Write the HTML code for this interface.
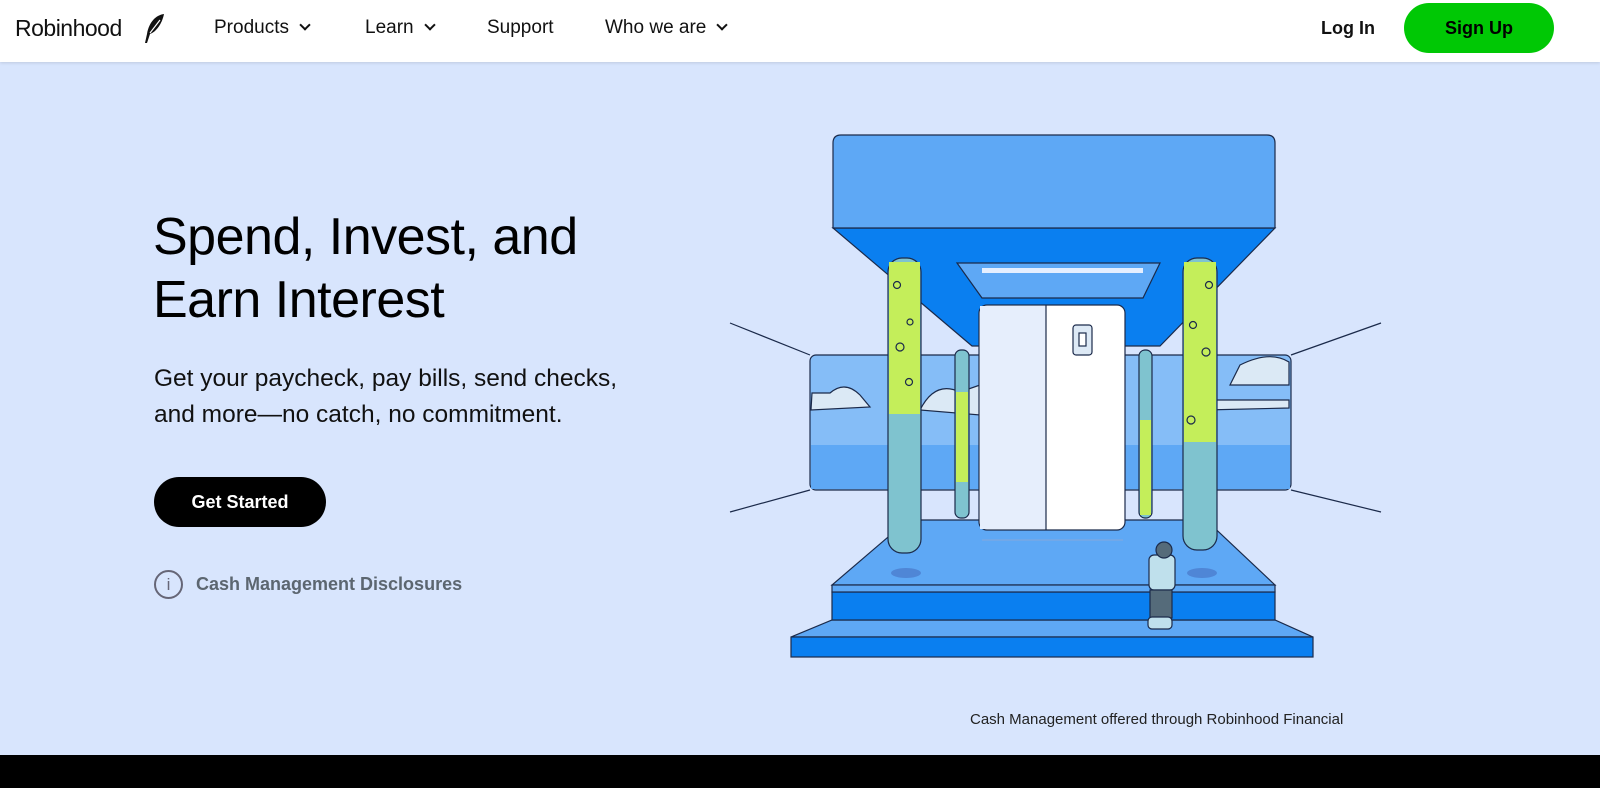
<!DOCTYPE html>
<html><head><meta charset="utf-8"><style>
*{margin:0;padding:0;box-sizing:border-box}
body{width:1600px;height:788px;overflow:hidden;background:#d8e5fd;font-family:"Liberation Sans",sans-serif;position:relative;color:#000}
.nav{position:absolute;left:0;top:0;width:1600px;height:62px;background:#fff;box-shadow:0 1px 3px rgba(0,0,0,.12)}
.nav span{position:absolute;top:17px;font-size:19px;color:#111}
.chev{display:inline-block;width:8px;height:8px;border-right:2.2px solid #111;border-bottom:2.2px solid #111;transform:rotate(45deg);margin-left:12px;position:relative;top:-4px}
.t{position:absolute}
</style></head><body>
<div class="nav">
<span style="left:15px;top:15px;font-size:23px;letter-spacing:-0.5px">Robinhood</span>
<svg style="position:absolute;left:142px;top:12px" width="24" height="34" viewBox="0 0 24 34"><path d="M22 2 C14 3 7 10 5 22 L3 31 L5 31 L8 22 C14 20 20 12 22 2 Z" fill="#111"/><path d="M8 21 L18 8" stroke="#fff" stroke-width="1.2"/></svg>
<span style="left:214px">Products<i class="chev"></i></span>
<span style="left:365px">Learn<i class="chev"></i></span>
<span style="left:487px">Support</span>
<span style="left:605px">Who we are<i class="chev"></i></span>
<span style="left:1321px;font-weight:bold;font-size:18px;top:18px">Log In</span>
<div style="position:absolute;left:1404px;top:3px;width:150px;height:50px;border-radius:25px;background:#00c805;color:#000;font-weight:bold;font-size:18px;text-align:center;line-height:50px">Sign Up</div>
</div>
<div class="t" style="left:153px;top:206px;font-size:52px;line-height:63px;letter-spacing:-0.5px">Spend, Invest, and<br>Earn Interest</div>
<div class="t" style="left:154px;top:361px;font-size:24.5px;line-height:36px;color:#111">Get your paycheck, pay bills, send checks,<br>and more—no catch, no commitment.</div>
<div class="t" style="left:154px;top:477px;width:172px;height:50px;border-radius:25px;background:#000;color:#fff;font-weight:bold;font-size:18px;text-align:center;line-height:50px">Get Started</div>
<div class="t" style="left:154px;top:570px;width:29px;height:29px;border:2px solid #667;border-radius:50%;color:#667;text-align:center;font-size:17px;line-height:25px">i</div>
<div class="t" style="left:196px;top:574px;font-size:18px;font-weight:bold;color:#5c6670">Cash Management Disclosures</div>
<div class="t" style="left:970px;top:711px;font-size:15px;color:#222">Cash Management offered through Robinhood Financial</div>
<svg class="t" style="left:0;top:0" width="1600" height="788" viewBox="0 0 1600 788">
<g stroke="#1b2a4a" stroke-width="1.2">
<line x1="730" y1="323" x2="810" y2="355"/><line x1="730" y1="512" x2="810" y2="490"/>
<line x1="1381" y1="323" x2="1291" y2="355"/><line x1="1381" y1="512" x2="1291" y2="490"/>
<polygon points="832,620 1275,620 1313,637 791,637" fill="#5ea8f5"/>
<rect x="791" y="637" width="522" height="20" fill="#0a7ff0"/>
<polygon points="908,520 1206,520 1275,585 832,585" fill="#5ea8f5"/>
<rect x="832" y="592" width="443" height="28" fill="#0a7ff0"/>
<rect x="832" y="585" width="443" height="7" fill="#5ea8f5"/>
<rect x="810" y="355" width="481" height="135" rx="6" fill="#85bdf7"/>
<rect x="811" y="445" width="479" height="44" fill="#5ea8f5" stroke="none"/>
<path d="M812 393 L830 393 Q845 380 860 395 L870 407 L811 410Z M920 410 Q935 380 960 392 L980 385 L980 415Z M1240 365 Q1270 350 1289 362 L1289 385 L1230 385Z M1205 400 L1289 400 L1289 408 L1205 410Z" fill="#dbe9f5"/>
<polygon points="833,228 1275,228 1160,346 972,346" fill="#0a7ff0"/>
<path d="M833,228 L833,143 Q833,135 841,135 L1267,135 Q1275,135 1275,143 L1275,228 Z" fill="#5ea8f5"/>
<polygon points="957,263 1160,263 1143,298 982,298" fill="#5ea8f5"/>
<rect x="982" y="268" width="161" height="5" fill="#e5efff" stroke="none"/>
<rect x="979" y="305" width="146" height="225" rx="8" fill="#ffffff"/>
<rect x="980" y="306" width="66" height="223" fill="#e6eefc" stroke="none"/>
<line x1="1046" y1="305" x2="1046" y2="530"/>
<rect x="1073" y="325" width="19" height="30" rx="3" fill="#dde9f5"/>
<rect x="1079" y="333" width="7" height="13" fill="#fff"/>
<line x1="982" y1="540" x2="1123" y2="540" stroke="#7fa9e0"/>
<rect x="955" y="350" width="14" height="168" rx="6" fill="#7fc3cf"/>
<rect x="956" y="392" width="12" height="90" fill="#c4ee5a" stroke="none"/>
<rect x="1139" y="350" width="13" height="168" rx="6" fill="#7fc3cf"/>
<rect x="1140" y="420" width="11" height="95" fill="#c4ee5a" stroke="none"/>
<rect x="888" y="258" width="33" height="295" rx="14" fill="#7fc3cf"/>
<rect x="889" y="262" width="31" height="152" fill="#c4ee5a" stroke="none"/>
<rect x="1183" y="258" width="34" height="292" rx="14" fill="#7fc3cf"/>
<rect x="1184" y="262" width="32" height="180" fill="#c4ee5a" stroke="none"/>
<g fill="none"><circle cx="897" cy="285" r="3.5"/><circle cx="910" cy="322" r="3"/><circle cx="900" cy="347" r="4"/><circle cx="909" cy="382" r="3.5"/><circle cx="1209" cy="285" r="3.5"/><circle cx="1193" cy="325" r="3.5"/><circle cx="1206" cy="352" r="4"/><circle cx="1191" cy="420" r="4"/></g>
<ellipse cx="906" cy="573" rx="15" ry="5" fill="#4f86d6" stroke="none"/>
<ellipse cx="1202" cy="573" rx="15" ry="5" fill="#4f86d6" stroke="none"/>
<rect x="1149" y="555" width="26" height="35" rx="5" fill="#bfe0ec"/>
<rect x="1150" y="590" width="22" height="28" fill="#556b7a"/>
<circle cx="1164" cy="550" r="8" fill="#556b7a"/>
<rect x="1148" y="617" width="24" height="12" rx="4" fill="#bfe0ec"/>
</g>
</svg>
<div class="t" style="left:0;top:755px;width:1600px;height:33px;background:#000"></div>
</body></html>
